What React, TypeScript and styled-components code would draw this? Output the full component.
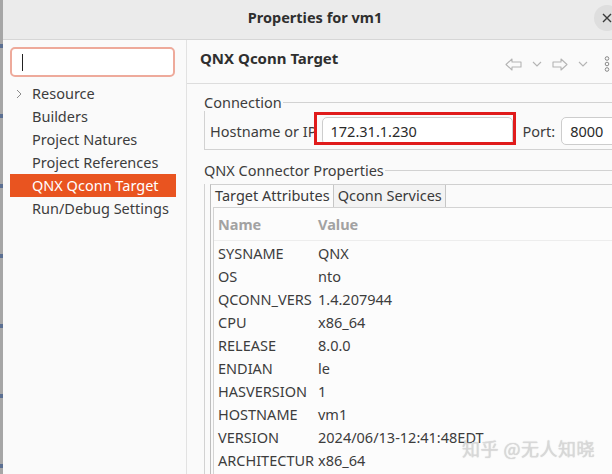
import React from 'react';
import styled, { createGlobalStyle } from 'styled-components';

const GlobalStyle = createGlobalStyle`
  * { box-sizing: border-box; }
  html, body {
    margin: 0;
    padding: 0;
    width: 612px;
    height: 474px;
    overflow: hidden;
    background: #9a9a9a;
  }
  body {
    font-family: "Noto Sans", "Open Sans", sans-serif;
    font-size: 14.5px;
    color: #3d3d3d;
  }
`;

const Screen = styled.div`
  position: relative;
  display: flex;
  width: 612px;
  height: 474px;
  overflow: hidden;
`;

const Backdrop = styled.div`
  flex: none;
  width: 3px;
  background:
    repeating-linear-gradient(180deg, transparent 0 44px, #5b6f92 44px 48px, transparent 48px 70px),
    #a6a6a6;
`;

const Window = styled.div`
  flex: none;
  width: 624px;
  display: flex;
  flex-direction: column;
  background: #fafafa;
`;

const TitleBar = styled.div`
  position: relative;
  flex: none;
  height: 40px;
  padding-bottom: 5px;
  display: flex;
  align-items: center;
  justify-content: center;
  background: #ebebeb;
  border-bottom: 1px solid #d6d6d6;
  font-weight: 700;
  color: #2f2f2f;
`;

const CloseButton = styled.div`
  position: absolute;
  top: 5px;
  right: 7px;
  width: 26px;
  height: 26px;
  border-radius: 50%;
  background: #dedede;
  display: flex;
  align-items: center;
  justify-content: center;
  color: #3a3a3a;
`;

const Body = styled.div`
  flex: 1;
  min-height: 0;
  display: flex;
`;

const Sidebar = styled.div`
  flex: none;
  width: 184px;
  padding: 7px 0 0 7px;
  border-right: 1px solid #e2e2e2;
  background: #fafafa;
`;

const Search = styled.div`
  width: 165px;
  height: 30px;
  border: 2px solid #eeaa9b;
  border-radius: 5px;
  background: #ffffff;
  display: flex;
  align-items: center;
  padding-left: 10px;
`;

const Caret = styled.div`
  width: 1px;
  height: 17px;
  background: #222;
`;

const Tree = styled.div`
  margin-top: 5px;
  display: flex;
  flex-direction: column;
`;

const TreeRow = styled.div<{ $selected?: boolean }>`
  position: relative;
  width: 166px;
  height: 23px;
  line-height: 23px;
  padding-left: 22px;
  white-space: nowrap;
  background: ${p => (p.$selected ? '#e95420' : 'transparent')};
  color: ${p => (p.$selected ? '#ffffff' : '#3d3d3d')};
`;

const Expander = styled.svg`
  position: absolute;
  left: 6px;
  top: 7px;
`;

const Main = styled.div`
  flex: 1;
  min-width: 0;
  display: flex;
  flex-direction: column;
  overflow: hidden;
`;

const MainHeader = styled.div`
  flex: none;
  height: 44px;
  display: flex;
  align-items: flex-start;
  padding: 7px 17px 0 13px;
  border-bottom: 1px solid #dddddd;
`;

const PageTitle = styled.div`
  font-size: 15px;
  font-weight: 700;
  line-height: 22px;
  color: #2f2f2f;
`;

const Nav = styled.div`
  margin-left: auto;
  margin-top: 9px;
  display: flex;
  align-items: center;
  gap: 10px;
  color: #b4b4b4;
`;

const MenuSlot = styled.span`
  display: flex;
  margin-left: 6px;
`;

const Content = styled.div`
  padding: 9px 0 0 17px;
  width: 460px;
`;

const Frame = styled.div<{ $gap?: number }>`
  margin-top: ${p => p.$gap ?? 0}px;
  width: 440px;
`;

const FrameHead = styled.div`
  height: 18px;
  display: flex;
  align-items: center;
  white-space: nowrap;
  color: #3d3d3d;

  &::after {
    content: '';
    flex: 1;
    margin-left: 1px;
    border-top: 1px solid #d2d2d2;
  }
`;

const FrameBody = styled.div`
  border: 1px solid #d2d2d2;
  border-top: none;
`;

const ConnRow = styled.div`
  display: flex;
  align-items: center;
  padding: 6px 0 4px 5px;
  white-space: nowrap;
`;

const FieldLabel = styled.span<{ $gap: number }>`
  flex: none;
  margin-right: ${p => p.$gap}px;
`;

const TextBox = styled.div<{ $width: number; $marked?: boolean }>`
  position: relative;
  flex: none;
  width: ${p => p.$width}px;
  height: 28px;
  line-height: 26px;
  padding-left: 8px;
  border: 1px solid #cdcdcd;
  border-radius: 5px;
  background: #ffffff;
  color: #2a2a2a;

  ${p =>
    p.$marked &&
    `
    &::after {
      content: '';
      position: absolute;
      top: -6px;
      left: -9px;
      right: -4px;
      bottom: -1px;
      border: 3px solid #e01b1b;
    }
  `}
`;

const PortLabel = styled.span`
  flex: none;
  margin: 0 6px 0 10px;
`;

const Notebook = styled.div`
  margin: 5px 0 0 5px;
  border-left: 1px solid #bdbdbd;
  border-top: 1px solid #d0d0d0;
`;

const TabStrip = styled.div`
  display: flex;
  height: 22px;
`;

const Tab = styled.div<{ $active?: boolean }>`
  padding: 0 3px 0 4px;
  line-height: 21px;
  border-right: 1px solid #c6c6c6;
  background: ${p => (p.$active ? '#fbfbfb' : '#f3f3f3')};
  color: #3a3a3a;
`;

const Panel = styled.div`
  margin-left: 2px;
  height: 300px;
  border: 1px solid #d3d3d3;
  background: #fcfcfc;
`;

const HeadRow = styled.div`
  display: flex;
  height: 33px;
  align-items: center;
  border-bottom: 1px solid #ededed;
  font-weight: 700;
  color: #a2a2a2;
`;

const Row = styled.div`
  display: flex;
  height: 23px;
  align-items: center;
  color: #3d3d3d;
`;

const NameCell = styled.div`
  flex: none;
  width: 100px;
  padding-left: 4px;
  overflow: hidden;
  white-space: nowrap;
`;

const ValueCell = styled.div`
  padding-left: 4px;
  white-space: nowrap;
`;

const Watermark = styled.div`
  position: absolute;
  left: 462px;
  top: 435px;
  font-family: "Noto Sans CJK SC", "Noto Sans", sans-serif;
  font-size: 18px;
  letter-spacing: 0.5px;
  color: rgba(218, 218, 218, 0.9);
  text-shadow: 0 0 1px rgba(110, 110, 110, 0.4);
  white-space: nowrap;
`;

const LeftArrow = () => (
  <svg width="17" height="13" viewBox="0 0 17 13">
    <path d="M1 6.5 L7 1 V4 H16 V9 H7 V12 Z" fill="none" stroke="currentColor" strokeWidth="1.1" strokeLinejoin="round" />
  </svg>
);

const RightArrow = () => (
  <svg width="16" height="13" viewBox="0 0 16 13">
    <path d="M15 6.5 L9 1 V4 H1 V9 H9 V12 Z" fill="none" stroke="currentColor" strokeWidth="1.1" strokeLinejoin="round" />
  </svg>
);

const Chevron = () => (
  <svg width="10" height="6" viewBox="0 0 10 6">
    <path d="M1 1 L5 5 L9 1" fill="none" stroke="currentColor" strokeWidth="1.1" />
  </svg>
);

const Dots = () => (
  <svg width="6" height="16" viewBox="0 0 6 16">
    <circle cx="3" cy="2.5" r="1.8" fill="none" stroke="#8a8a8a" strokeWidth="1" />
    <circle cx="3" cy="8" r="1.8" fill="none" stroke="#8a8a8a" strokeWidth="1" />
    <circle cx="3" cy="13.5" r="1.8" fill="none" stroke="#8a8a8a" strokeWidth="1" />
  </svg>
);

const treeItems = [
  'Resource',
  'Builders',
  'Project Natures',
  'Project References',
  'QNX Qconn Target',
  'Run/Debug Settings',
];

// names are shown as the narrow column clips them
const attributes: [string, string][] = [
  ['SYSNAME', 'QNX'],
  ['OS', 'nto'],
  ['QCONN_VERS', '1.4.207944'],
  ['CPU', 'x86_64'],
  ['RELEASE', '8.0.0'],
  ['ENDIAN', 'le'],
  ['HASVERSION', '1'],
  ['HOSTNAME', 'vm1'],
  ['VERSION', '2024/06/13-12:41:48EDT'],
  ['ARCHITECTUR', 'x86_64'],
];

const App: React.FC = () => (
  <>
    <GlobalStyle />
    <Screen>
      <Backdrop />
      <Window>
        <TitleBar>
          Properties for vm1
          <CloseButton>
            <svg width="10" height="10" viewBox="0 0 10 10">
              <path d="M1 1 L9 9 M9 1 L1 9" stroke="currentColor" strokeWidth="1.4" />
            </svg>
          </CloseButton>
        </TitleBar>
        <Body>
          <Sidebar>
            <Search>
              <Caret />
            </Search>
            <Tree>
              {treeItems.map(item => (
                <TreeRow key={item} $selected={item === 'QNX Qconn Target'}>
                  {item === 'Resource' && (
                    <Expander width="6" height="10" viewBox="0 0 6 10">
                      <path d="M1 1 L5 5 L1 9" fill="none" stroke="#8c8c8c" strokeWidth="1" />
                    </Expander>
                  )}
                  {item}
                </TreeRow>
              ))}
            </Tree>
          </Sidebar>
          <Main>
            <MainHeader>
              <PageTitle>QNX Qconn Target</PageTitle>
              <Nav>
                <LeftArrow />
                <Chevron />
                <RightArrow />
                <Chevron />
                <MenuSlot>
                  <Dots />
                </MenuSlot>
              </Nav>
            </MainHeader>
            <Content>
              <Frame>
                <FrameHead>Connection</FrameHead>
                <FrameBody>
                  <ConnRow>
                    <FieldLabel $gap={5}>Hostname or IP</FieldLabel>
                    <TextBox $width={191} $marked>172.31.1.230</TextBox>
                    <PortLabel>Port:</PortLabel>
                    <TextBox $width={62}>8000</TextBox>
                  </ConnRow>
                </FrameBody>
              </Frame>
              <Frame $gap={11}>
                <FrameHead>QNX Connector Properties</FrameHead>
                <FrameBody>
                  <Notebook>
                    <TabStrip>
                      <Tab $active>Target Attributes</Tab>
                      <Tab>Qconn Services</Tab>
                    </TabStrip>
                    <Panel>
                      <HeadRow>
                        <NameCell>Name</NameCell>
                        <ValueCell>Value</ValueCell>
                      </HeadRow>
                      {attributes.map(([name, value]) => (
                        <Row key={name}>
                          <NameCell>{name}</NameCell>
                          <ValueCell>{value}</ValueCell>
                        </Row>
                      ))}
                    </Panel>
                  </Notebook>
                </FrameBody>
              </Frame>
            </Content>
          </Main>
        </Body>
      </Window>
      <Watermark>知乎 @无人知晓</Watermark>
    </Screen>
  </>
);

export default App;
